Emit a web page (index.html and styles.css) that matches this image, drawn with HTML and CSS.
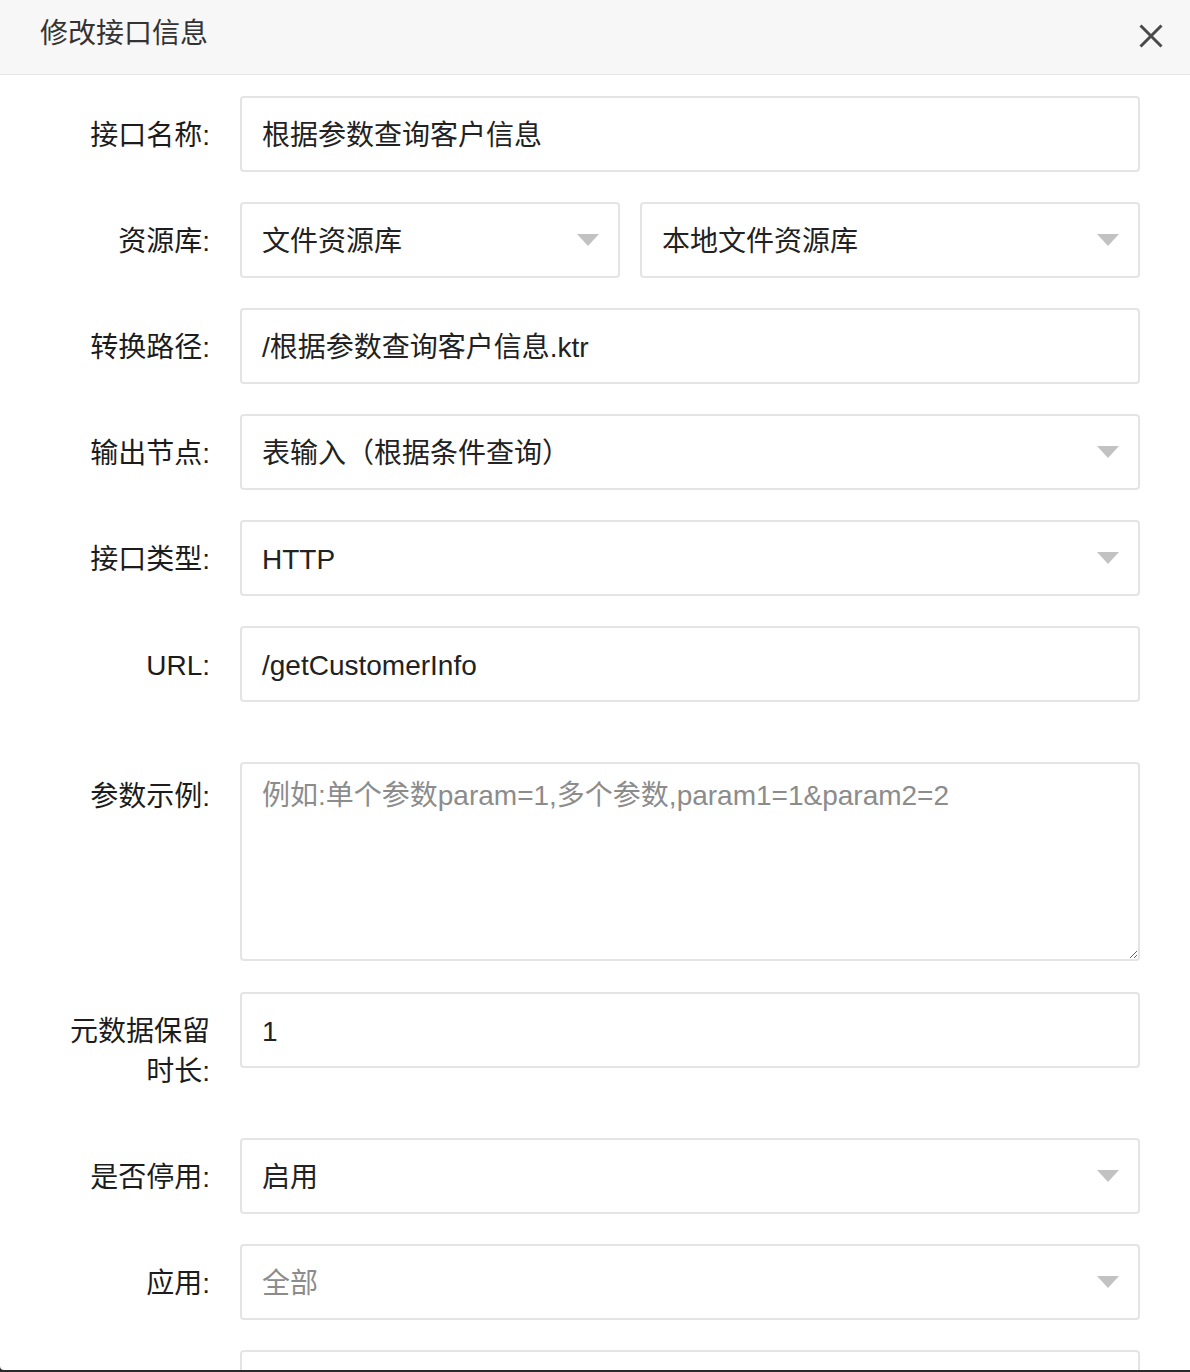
FILE: index.html
```html
<!DOCTYPE html>
<html lang="zh-CN">
<head>
<meta charset="utf-8">
<title>修改接口信息</title>
<link rel="stylesheet" href="styles.css">
</head>
<body>
<div class="dialog">
  <div class="dialog-header">
    <span class="dialog-title">修改接口信息</span>
    <svg class="close" width="24" height="24" viewBox="0 0 24 24"><path d="M1.5 1.5 L22.5 22.5 M22.5 1.5 L1.5 22.5" stroke="#4a4a4a" stroke-width="3" fill="none"/></svg>
  </div>
  <div class="form">
    <div class="row">
      <label class="label">接口名称:</label>
      <div class="field"><div class="input">根据参数查询客户信息</div></div>
    </div>
    <div class="row">
      <label class="label">资源库:</label>
      <div class="field split">
        <div class="input select">文件资源库<span class="arrow"></span></div>
        <div class="input select">本地文件资源库<span class="arrow"></span></div>
      </div>
    </div>
    <div class="row">
      <label class="label">转换路径:</label>
      <div class="field"><div class="input">/根据参数查询客户信息.ktr</div></div>
    </div>
    <div class="row">
      <label class="label">输出节点:</label>
      <div class="field"><div class="input select">表输入（根据条件查询）<span class="arrow"></span></div></div>
    </div>
    <div class="row">
      <label class="label">接口类型:</label>
      <div class="field"><div class="input select">HTTP<span class="arrow"></span></div></div>
    </div>
    <div class="row row-wide">
      <label class="label">URL:</label>
      <div class="field"><div class="input">/getCustomerInfo</div></div>
    </div>
    <div class="row row-tight">
      <label class="label label-area">参数示例:</label>
      <div class="field"><textarea class="textarea" placeholder="例如:单个参数param=1,多个参数,param1=1&amp;param2=2"></textarea></div>
    </div>
    <div class="row">
      <label class="label">元数据保留<br>时长:</label>
      <div class="field"><div class="input">1</div></div>
    </div>
    <div class="row">
      <label class="label">是否停用:</label>
      <div class="field"><div class="input select">启用<span class="arrow"></span></div></div>
    </div>
    <div class="row">
      <label class="label">应用:</label>
      <div class="field"><div class="input select placeholder">全部<span class="arrow"></span></div></div>
    </div>
    <div class="row">
      <label class="label"></label>
      <div class="field"><div class="input"></div></div>
    </div>
  </div>
</div>
</body>
</html>
```

FILE: styles.css
```css
* { box-sizing: border-box; }
html, body { margin: 0; padding: 0; }
body {
  background: #2a2a2a;
  font-family: "Liberation Sans", "Noto Sans CJK SC", sans-serif;
  height: 1372px;
  overflow: hidden;
}
.dialog {
  background: #ffffff;
  height: 1370px;
  overflow: hidden;
  border-bottom-left-radius: 4px;
}
.dialog-header {
  height: 75px;
  background: #f7f7f7;
  border-bottom: 1px solid #e6e6e6;
  display: flex;
  align-items: center;
  justify-content: space-between;
  padding: 0 27px 6px 40px;
}
.dialog-title {
  font-size: 28px;
  color: #333;
  line-height: 40px;
}
.close { display: block; margin-top: 4px; }
.form {
  padding-top: 21px;
}
.row {
  display: grid;
  grid-template-columns: 210px 900px;
  column-gap: 30px;
  margin-bottom: 30px;
  align-items: start;
}
.row-wide { margin-bottom: 60px; }
.row-tight { margin-bottom: 31px; }
.label {
  text-align: right;
  font-size: 28px;
  line-height: 40px;
  padding: 20px 0 16px;
  color: #1c1c1c;
}
.label-area { padding-top: 15px; }
.field { min-width: 0; }
.split {
  display: grid;
  grid-template-columns: 380px 500px;
  column-gap: 20px;
}
.input {
  height: 76px;
  border: 2px solid #e4e4e4;
  border-radius: 4px;
  padding: 2px 20px 0;
  font-size: 28px;
  line-height: 72px;
  color: #222;
  white-space: nowrap;
  background: #fff;
}
.select {
  position: relative;
  padding-right: 60px;
}
.placeholder { color: #8c8c8c; }
.arrow {
  position: absolute;
  right: 19px;
  top: 30px;
  width: 0;
  height: 0;
  border-left: 11.5px solid transparent;
  border-right: 11.5px solid transparent;
  border-top: 12px solid #c2c2c2;
}
.textarea {
  display: block;
  width: 100%;
  height: 199px;
  border: 2px solid #e4e4e4;
  border-radius: 4px;
  padding: 12px 20px;
  font-family: "Liberation Sans", "Noto Sans CJK SC", sans-serif;
  font-size: 28px;
  line-height: 40px;
  color: #222;
  resize: vertical;
  outline: none;
  margin: 0;
}
.textarea::placeholder { color: #8c8c8c; opacity: 1; }
```
